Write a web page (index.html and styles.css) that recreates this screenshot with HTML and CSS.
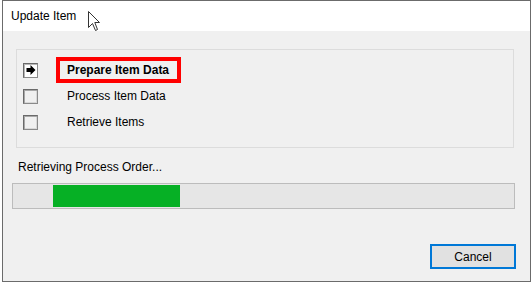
FILE: index.html
```html
<!DOCTYPE html>
<html>
<head>
<meta charset="utf-8">
<link rel="stylesheet" href="styles.css">
</head>
<body>
<div class="window">
  <div class="titlebar">
    <span class="title">Update Item</span>
    <svg class="cursor" width="13" height="21" viewBox="0 0 13 21">
      <path d="M0.5 0.5 L0.5 16.5 L4.5 12.5 L7.5 19.5 L9.5 18.5 L6.8 11.5 L11.5 11.5 Z" fill="#fff" stroke="#333" stroke-width="1"/>
    </svg>
  </div>
  <div class="content">
    <div class="group">
      <div class="row">
        <span class="box box-current">
          <svg width="10" height="10" viewBox="0 0 10 10"><path d="M0.5 3 H4.5 V0 L9.5 5 L4.5 10 V7 H0.5 Z" fill="#000"/></svg>
        </span>
        <span class="label label-active">Prepare Item Data</span>
      </div>
      <div class="row">
        <span class="box"></span>
        <span class="label">Process Item Data</span>
      </div>
      <div class="row">
        <span class="box"></span>
        <span class="label">Retrieve Items</span>
      </div>
    </div>
    <div class="status">Retrieving Process Order...</div>
    <div class="progress"><div class="progress-fill"></div></div>
    <div class="footer">
      <button class="btn">Cancel</button>
    </div>
  </div>
</div>
</body>
</html>
```
FILE: styles.css
```css
html, body {
  margin: 0;
  padding: 0;
}
body {
  width: 532px;
  height: 284px;
  background: #ffffff;
  overflow: hidden;
  font-family: "Liberation Sans", "Noto Sans", sans-serif;
  font-size: 12px;
  color: #000;
}
.window {
  margin-left: 2px;
  width: 529px;
  height: 282px;
  box-sizing: border-box;
  border: 1px solid #6b6b6b;
  display: flex;
  flex-direction: column;
}
.titlebar {
  position: relative;
  height: 30px;
  background: #ffffff;
  display: flex;
  align-items: center;
  padding-left: 8px;
  flex: none;
}
.title {
  font-size: 12px;
  line-height: 16px;
}
.cursor {
  position: absolute;
  left: 85px;
  top: 10px;
}
.content {
  flex: 1;
  background: #f0f0f0;
  padding-top: 18px;
}
.group {
  margin-left: 13px;
  width: 498px;
  height: 99px;
  box-sizing: border-box;
  border: 1px solid #dcdcdc;
  padding-top: 7px;
  padding-left: 6px;
}
.row {
  display: flex;
  align-items: center;
  height: 26px;
}
.box {
  width: 15px;
  height: 15px;
  box-sizing: border-box;
  border: 1px solid #6a6a6a;
  border-right-color: #8a8a8a;
  border-bottom-color: #8a8a8a;
  background: #f0f0f0;
  box-shadow: inset 1px 1px 0 #a8a8a8, inset -1px -1px 0 #d8d8d8;
  display: flex;
  align-items: center;
  justify-content: center;
  flex: none;
}
.box-current {
  background: #ffffff;
  box-shadow: inset 1px 1px 0 #b8b8b8;
}
.label {
  margin-left: 18px;
  height: 26px;
  box-sizing: border-box;
  border: 4px solid transparent;
  padding: 0 8px 0 7px;
  display: flex;
  align-items: center;
  line-height: 16px;
}
.label-active {
  border-color: #ff0000;
  font-weight: bold;
}
.status {
  margin-left: 15px;
  margin-top: 11px;
  line-height: 16px;
}
.progress {
  margin-top: 8px;
  margin-left: 9px;
  width: 503px;
  height: 26px;
  box-sizing: border-box;
  border: 1px solid #bcbcbc;
  background: #e6e6e6;
  padding: 1px 0 1px 40px;
}
.progress-fill {
  width: 127px;
  height: 22px;
  background: #06b025;
}
.footer {
  display: flex;
  justify-content: flex-end;
  padding-right: 14px;
  margin-top: 35px;
}
.btn {
  width: 86px;
  height: 25px;
  box-sizing: border-box;
  border: 2px solid #0078d7;
  background: #e1e1e1;
  font-family: "Liberation Sans", "Noto Sans", sans-serif;
  font-size: 12px;
  color: #000;
  padding: 0;
  margin: 0;
}
```
